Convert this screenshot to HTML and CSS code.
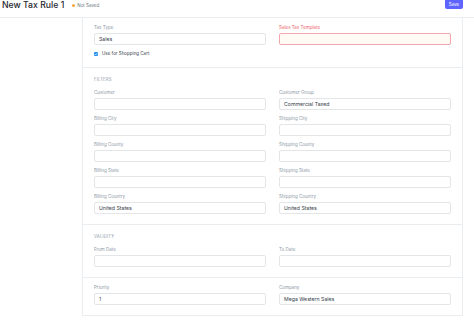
FILE: index.html
```html
<!DOCTYPE html>
<html>
<head>
    <meta charset="UTF-8">
    <title>New Tax Rule 1</title>
    <link rel="stylesheet" href="styles.css">
</head>
<body>
    <div class="page-head">
        <h1 class="title">New Tax Rule 1</h1>
        <span class="indicator">Not Saved</span>
        <button class="btn-save">Save</button>
    </div>
    <div class="form">
        <div class="section">
            <div class="row">
                <div class="col">
                    <div class="field">
                        <label>Tax Type</label>
                        <div class="input">Sales</div>
                    </div>
                    <div class="check">
                        <span class="box">
                            <svg width="4" height="4" viewBox="0 0 8 8"><path d="M1.5 4.2 3.3 6 6.6 2.2" fill="none" stroke="#fff" stroke-width="1.4"/></svg>
                        </span>
                        <span>Use for Shopping Cart</span>
                    </div>
                </div>
                <div class="col">
                    <div class="field error">
                        <label>Sales Tax Template</label>
                        <div class="input"></div>
                    </div>
                </div>
            </div>
        </div>
        <div class="section">
            <p class="head">Filters</p>
            <div class="row">
                <div class="col">
                    <div class="field"><label>Customer</label><div class="input"></div></div>
                    <div class="field"><label>Billing City</label><div class="input"></div></div>
                    <div class="field"><label>Billing County</label><div class="input"></div></div>
                    <div class="field"><label>Billing State</label><div class="input"></div></div>
                    <div class="field"><label>Billing Country</label><div class="input">United States</div></div>
                </div>
                <div class="col">
                    <div class="field"><label>Customer Group</label><div class="input">Commercial Taxed</div></div>
                    <div class="field"><label>Shipping City</label><div class="input"></div></div>
                    <div class="field"><label>Shipping County</label><div class="input"></div></div>
                    <div class="field"><label>Shipping State</label><div class="input"></div></div>
                    <div class="field"><label>Shipping Country</label><div class="input">United States</div></div>
                </div>
            </div>
        </div>
        <div class="section">
            <p class="head">Validity</p>
            <div class="row">
                <div class="col">
                    <div class="field"><label>From Date</label><div class="input"></div></div>
                </div>
                <div class="col">
                    <div class="field"><label>To Date</label><div class="input"></div></div>
                </div>
            </div>
        </div>
        <div class="section">
            <div class="row">
                <div class="col">
                    <div class="field"><label>Priority</label><div class="input">1</div></div>
                </div>
                <div class="col">
                    <div class="field"><label>Company</label><div class="input">Mega Western Sales</div></div>
                </div>
            </div>
        </div>
    </div>
</body>
</html>
```

FILE: styles.css
```css
body{margin:0;font-family:Inter,"Noto Sans",sans-serif;color:#36414c;background:#fff;}
p,h1{margin:0;}

.page-head{
    display: flex;
    align-items: flex-start;
    height: 18px;
    border-bottom: 1px solid #ebeef0;
    box-sizing: border-box;
}
.page-head .title{
    margin: 0 0 0 2px;
    font-size: 8.7px;
    font-weight: 500;
    line-height: 11px;
    color: #1f272e;
}
.page-head .indicator{
    display: flex;
    align-items: center;
    margin: 3px 0 0 8px;
    font-size: 4.5px;
    line-height: 5px;
    color: #6c7680;
}
.indicator::before{
    content: "";
    width: 3px;
    height: 3px;
    margin-right: 2px;
    border-radius: 50%;
    background-color: #f8a53b;
}
.btn-save{
    margin: -3px 11px 0 auto;
    width: 18px;
    height: 12px;
    padding: 3px 0 0;
    border: none;
    border-radius: 2px;
    background-color: #5e64ff;
    color: #fff;
    font-family: inherit;
    font-size: 4.5px;
}

.form{
    width: 381px;
    margin-left: 82px;
    border: 1px solid #ebeef0;
    border-top: none;
    box-sizing: border-box;
}
.section{
    padding: 7px 11px 10px;
    border-bottom: 1px solid #ebeef0;
}
.section:last-child{
    border-bottom: none;
}
.section .head{
    margin: 2px 0 7px;
    font-size: 4.2px;
    line-height: 6px;
    text-transform: uppercase;
    letter-spacing: .2px;
    color: #8d99a6;
}
.row{
    display: grid;
    grid-template-columns: 172px 172px;
    column-gap: 13px;
}
.field{
    margin-bottom: 6px;
}
.col .field:last-child{
    margin-bottom: 0;
}
.field label{
    display: block;
    margin-bottom: 2px;
    font-size: 4.5px;
    line-height: 6px;
    color: #8d99a6;
}
.field .input{
    height: 12px;
    padding: 0 4px;
    border: 1px solid #e2e6e9;
    border-radius: 2px;
    box-sizing: border-box;
    font-size: 5.2px;
    line-height: 10px;
    color: #36414c;
}
.field.error label{
    color: #f0616a;
}
.field.error .input{
    border-color: #f3a7ac;
    background-color: #fffaf3;
}
.check{
    display: flex;
    align-items: center;
    margin-top: 5px;
    font-size: 4.5px;
    line-height: 6px;
    color: #36414c;
}
.check .box{
    display: flex;
    width: 4px;
    height: 4px;
    margin-right: 4px;
    border-radius: 1px;
    background-color: #2490ef;
}
```
